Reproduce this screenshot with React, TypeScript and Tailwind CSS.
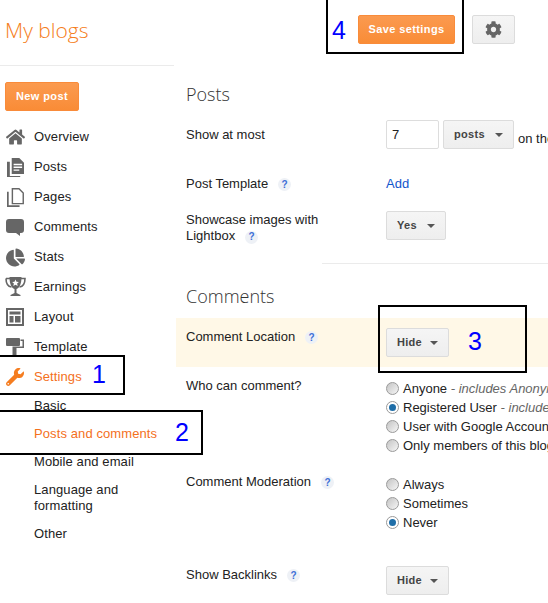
import { FaHome, FaChartPie, FaWrench, FaCog } from 'react-icons/fa';

const sans = "font-['Liberation_Sans',Arial,sans-serif]";

function PostsIcon() {
  return (
    <svg viewBox="0 0 18 20" className="h-[19px] w-[17px] fill-[#666]">
      <path d="M5 0h8l5 5v12H5zM7 6v1.5h9V6zM7 9v1.5h9V9zM7 12v1.5h6V12z" fillRule="evenodd" />
      <path d="M0 4h3v15h11v1H0z" />
    </svg>
  );
}

function PagesIcon() {
  return (
    <svg viewBox="0 0 18 20" className="h-[19px] w-[17px] fill-none stroke-[#666] stroke-[1.5]">
      <path d="M5.7.8h7l4.500 4.500V16.500H5.700z" />
      <path d="M.8 4v15.200h12.500" strokeWidth="2" />
    </svg>
  );
}

function CommentIcon() {
  return (
    <svg viewBox="0 0 18 17" className="h-[17px] w-[18px] fill-[#666]">
      <path d="M3 0h12a3 3 0 0 1 3 3v8a3 3 0 0 1-3 3h-1v3l-4-3H3a3 3 0 0 1-3-3V3a3 3 0 0 1 3-3z" />
    </svg>
  );
}

function TrophyIcon() {
  return (
    <svg viewBox="0 0 21 20" className="h-[20px] w-[21px]">
      <path d="M1 1.500h19c0 5-2 8-5.500 8.500" fill="none" stroke="#666" strokeWidth="1.600" />
      <path d="M1 1.500c0 5 2 8 5.500 8.500" fill="none" stroke="#666" strokeWidth="1.600" />
      <path d="M4.500 0h12c0 7-2 11-5 12v4l4 2v1h-10v-1l4-2v-4c-3-1-5-5-5-12z" fill="#666" />
      <path d="M10.500 2.500l1 2.300 2.400.2-1.800 1.600.6 2.400-2.200-1.300-2.200 1.300.6-2.400L7.100 5l2.400-.2z" fill="#fff" />
    </svg>
  );
}

function LayoutIcon() {
  return (
    <svg viewBox="0 0 18 18" className="h-[18px] w-[18px]">
      <path d="M0 0h18v18H0zM2 2v14h14V2z" fill="#666" fillRule="evenodd" />
      <path d="M3.500 3.500h11v3h-11zM3.500 8h4v6.500h-4zM9 8h5.500v6.500H9z" fill="#666" />
    </svg>
  );
}

function RollerIcon() {
  return (
    <svg viewBox="0 0 18 20" className="h-[20px] w-[18px] fill-[#666]">
      <path d="M1 1h12a1 1 0 0 1 1 1v6a1 1 0 0 1-1 1H1a1 1 0 0 1-1-1V2a1 1 0 0 1 1-1z" />
      <path d="M14.500 2.500H18v8.500H10.500v2H6.500v-3.500h10V4h-2z" />
      <path d="M6.500 13h4v7h-4z" />
    </svg>
  );
}

function NavItem({ icon, label, active }: { icon: React.ReactNode; label: string; active?: boolean }) {
  return (
    <div className={`flex h-[30px] items-center text-[13px] tracking-[0.1px] ${active ? 'text-[#f4701c]' : 'text-[#222]'}`}>
      <span className="flex w-[34px] justify-center pr-[7px] pl-[3px]">{icon}</span>
      {label}
    </div>
  );
}

function SubItem({ label, active }: { label: string; active?: boolean }) {
  return (
    <div className={`box-content w-[125px] pl-[34px] text-[13px] leading-4 tracking-[0.1px] ${active ? 'text-[#f4701c]' : 'text-[#222]'}`}>
      {label}
    </div>
  );
}

function Help() {
  return (
    <span className="ml-[10px] inline-flex h-[13px] w-[13px] items-center justify-center rounded-full bg-[#eef1f6] text-[10px] font-bold text-[#3d6fd6]">
      ?
    </span>
  );
}

function Dropdown({ label, width }: { label: string; width: string }) {
  return (
    <div className={`flex h-[29px] ${width} shrink-0 items-center justify-between rounded-[2px] border border-[#dcdcdc] bg-gradient-to-b from-[#f5f5f5] to-[#eeeeee] pr-[10px] pl-[10px] text-[11px] font-bold tracking-[0.3px] text-[#444]`}>
      {label}
      <span className="h-0 w-0 border-x-[4px] border-t-[4px] border-x-transparent border-t-[#555]" />
    </div>
  );
}

function Radio({ checked, children }: { checked?: boolean; children: React.ReactNode }) {
  return (
    <div className="flex h-[19px] items-center whitespace-nowrap text-[13px] text-[#222]">
      <span className={`mr-[4px] flex h-[13px] w-[13px] shrink-0 items-center justify-center rounded-full border border-[#9a9a9a] ${checked ? 'bg-white' : 'bg-gradient-to-br from-[#c4c4c4] to-[#f6f6f6]'}`}>
        {checked && <span className="h-[7px] w-[7px] rounded-full bg-[#1f6ea8]" />}
      </span>
      {children}
    </div>
  );
}

function Note({ children }: { children: React.ReactNode }) {
  return <i className="text-[#666]">{children}</i>;
}

export default function App() {
  return (
    <div className={`relative flex h-[603px] w-[548px] overflow-hidden bg-white ${sans}`}>
      <aside className="w-[174px] shrink-0">
        <div className="h-[66px] border-b border-[#ebebeb] pt-[14px] pl-[5px] font-['Open_Sans',sans-serif] text-[21px] font-light leading-[32px] text-[#f57d20]">
          My blogs
        </div>
        <div className="mt-[16px] ml-[5px] flex h-[29px] w-[74px] items-center justify-center rounded-[2px] border border-[#f98b3a] bg-gradient-to-b from-[#fb9a4f] to-[#f98c36] text-[11px] font-bold tracking-[0.4px] text-white">
          New post
        </div>
        <div className="mt-[11px]">
          <NavItem icon={<FaHome className="h-[18px] w-[19px] text-[#666]" />} label="Overview" />
          <NavItem icon={<PostsIcon />} label="Posts" />
          <NavItem icon={<PagesIcon />} label="Pages" />
          <NavItem icon={<CommentIcon />} label="Comments" />
          <NavItem icon={<FaChartPie className="h-[19px] w-[19px] text-[#666]" />} label="Stats" />
          <NavItem icon={<TrophyIcon />} label="Earnings" />
          <NavItem icon={<LayoutIcon />} label="Layout" />
          <NavItem icon={<RollerIcon />} label="Template" />
          <NavItem icon={<FaWrench className="h-[18px] w-[18px] text-[#f57d20]" />} label="Settings" active />
        </div>
        <div className="mt-[6px] flex flex-col gap-[12px]">
          <SubItem label="Basic" />
          <SubItem label="Posts and comments" active />
          <SubItem label="Mobile and email" />
          <SubItem label="Language and formatting" />
          <SubItem label="Other" />
        </div>
      </aside>

      <main className="min-w-0 flex-1 text-[13px] text-[#222]">
        <div className="flex pt-[15px] pl-[184px]">
          <div className="flex h-[29px] w-[97px] items-center justify-center rounded-[2px] border border-[#f98b3a] bg-gradient-to-b from-[#fb9a4f] to-[#f98c36] text-[11px] font-bold tracking-[0.4px] text-white">
            Save settings
          </div>
          <div className="ml-[17px] flex h-[29px] w-[43px] items-center justify-center rounded-[2px] border border-[#dcdcdc] bg-gradient-to-b from-[#f5f5f5] to-[#eeeeee]">
            <FaCog className="h-[17px] w-[17px] text-[#666]" />
          </div>
        </div>

        <h2 className="mt-[37px] pl-[12px] font-['Open_Sans',sans-serif] text-[18px] font-light leading-[26px] text-[#333]">Posts</h2>

        <div className="mt-[13px] flex h-[29px] pl-[12px]">
          <div className="w-[200px] shrink-0 pt-[5px]">Show at most</div>
          <div className="flex h-[29px] w-[53px] shrink-0 items-center rounded-[2px] border border-[#dddddd] pl-[5px] text-[13px]">7</div>
          <div className="ml-[4px] shrink-0"><Dropdown label="posts" width="w-[71px]" /></div>
          <div className="ml-[4px] shrink-0 whitespace-nowrap pt-[9px]">on the main page</div>
        </div>

        <div className="mt-[25px] flex h-[16px] pl-[12px]">
          <div className="w-[200px] shrink-0">Post Template<Help /></div>
          <div className="text-[#1155cc]">Add</div>
        </div>

        <div className="mt-[21px] flex h-[29px] pl-[12px]">
          <div className="w-[200px] shrink-0 pt-[1px] leading-4">Showcase images with<br />Lightbox<Help /></div>
          <Dropdown label="Yes" width="w-[60px]" />
        </div>

        <div className="mt-[23px] ml-[148px] h-px bg-[#ebebeb]" />

        <h2 className="mt-[19px] pl-[12px] font-['Open_Sans',sans-serif] text-[18px] font-light leading-[26px] text-[#333]">Comments</h2>

        <div className="mt-[9px] ml-[2px] flex h-[49px] bg-[#fff8e7] pt-[10px] pl-[10px]">
          <div className="-mt-px w-[200px] shrink-0">Comment Location<Help /></div>
          <Dropdown label="Hide" width="w-[63px]" />
        </div>

        <div className="mt-[9px] flex pl-[12px]">
          <div className="w-[200px] shrink-0">Who can comment?</div>
          <div className="min-w-0 flex-1 pt-[3px]">
            <Radio>Anyone&nbsp;<Note>- includes Anonymous Users</Note></Radio>
            <Radio checked>Registered User&nbsp;<Note>- includes OpenID</Note></Radio>
            <Radio>User with Google Accounts</Radio>
            <Radio>Only members of this blog</Radio>
          </div>
        </div>

        <div className="mt-[17px] flex pl-[12px]">
          <div className="w-[200px] shrink-0">Comment Moderation<Help /></div>
          <div className="pt-[3px]">
            <Radio>Always</Radio>
            <Radio>Sometimes</Radio>
            <Radio checked>Never</Radio>
          </div>
        </div>

        <div className="mt-[34px] flex pl-[12px]">
          <div className="-mt-px w-[200px] shrink-0">Show Backlinks<Help /></div>
          <Dropdown label="Hide" width="w-[63px]" />
        </div>
      </main>

      {/* annotation boxes drawn on top of the screenshot */}
      <div className="absolute top-[-3px] left-[326px] flex h-[57px] w-[138px] items-center border-[2.500px] border-black pt-[10px] pl-[4px] text-[25px] text-[#0000ff]">4</div>
      <div className="absolute top-[305px] left-[378px] flex h-[68px] w-[149px] items-center border-[2.500px] border-black pt-[6px] pl-[88px] text-[25px] text-[#0000ff]">3</div>
      <div className="absolute top-[355px] left-[-3px] flex h-[40px] w-[128px] items-center border-[2.500px] border-black bg-transparent pl-[93px] text-[25px] text-[#0000ff]">1</div>
      <div className="absolute top-[410px] left-[-3px] flex h-[45px] w-[206px] items-center border-[2.500px] border-black pl-[176px] text-[25px] text-[#0000ff]">2</div>
    </div>
  );
}
